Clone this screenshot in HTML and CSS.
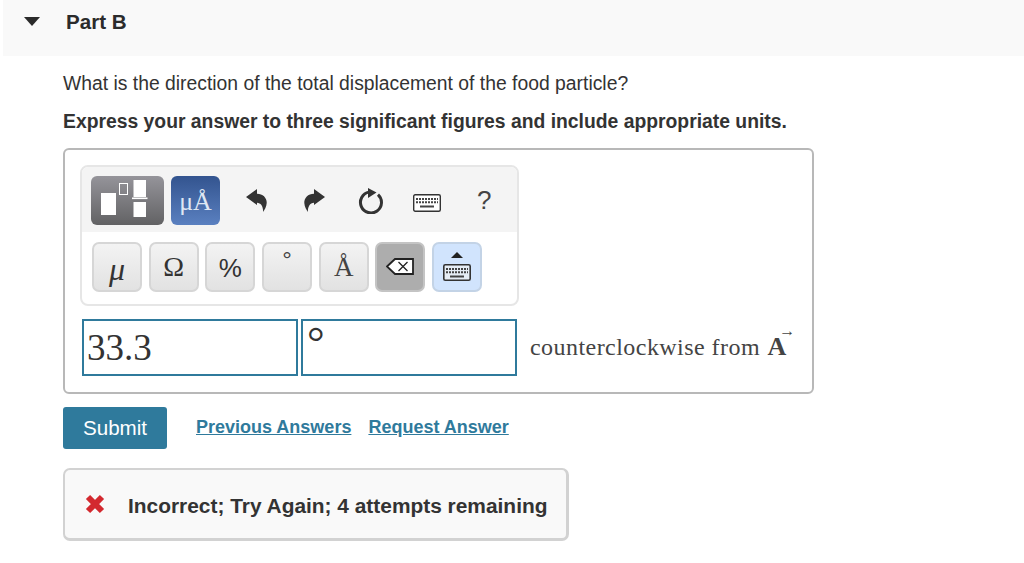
FILE: index.html
```html
<!doctype html>
<html lang="en">
  <head>
    <meta charset="UTF-8" />
    <title>Part B</title>
    <link rel="stylesheet" href="styles.css">
  </head>
  <body>
    <header class="part-header">
      <span class="caret"></span>
      <h2>Part B</h2>
    </header>

    <main class="part-body">
      <p class="question">What is the direction of the total displacement of the food particle?</p>
      <p class="instruction">Express your answer to three significant figures and include appropriate units.</p>

      <div class="answer-box">
        <div class="toolbar">
          <div class="toolbar-top">
            <button class="tool-main tool-templates" aria-label="Templates">
              <svg width="73" height="49" viewBox="0 0 73 49">
                <rect x="10" y="17" width="15" height="22" fill="#fff"/>
                <rect x="28.500" y="7.500" width="8" height="11" fill="none" stroke="#fff" stroke-width="1"/>
                <rect x="42.500" y="4" width="12.500" height="17" fill="#fff"/>
                <rect x="41" y="21.500" width="15.500" height="1.600" fill="#fff"/>
                <rect x="42.500" y="26" width="12.500" height="15" fill="#fff"/>
              </svg>
            </button>
            <button class="tool-main tool-units">μÅ</button>
            <div class="tool-icons">
              <svg class="tool-icon icon-undo" width="21" height="24" viewBox="0 0 21 24">
                <path d="M0 8 L11 0 V4.700 C17 4.700 21 9 20.700 14 C20.500 18 18.500 21 17 23 C17.500 18 15 13.700 11 13.700 V16 Z" fill="#333"/>
              </svg>
              <svg class="tool-icon icon-redo" width="21" height="24" viewBox="0 0 21 24">
                <path d="M21 8 L10 0 V4.700 C4 4.700 0 9 0.300 14 C0.500 18 2.500 21 4 23 C3.500 18 6 13.700 10 13.700 V16 Z" fill="#333"/>
              </svg>
              <svg class="tool-icon icon-reload" width="25" height="26" viewBox="0 0 25 26">
                <path d="M11 4.100 A10.500 10.500 0 1 0 20 6.600" fill="none" stroke="#333" stroke-width="3"/>
                <path d="M10 0 L18.500 4.500 L10 10 Z" fill="#333"/>
              </svg>
              <svg class="tool-icon icon-keyboard" width="28" height="18" viewBox="0 0 28 18">
                <rect x="0.700" y="0.700" width="26.600" height="16.600" rx="1.500" fill="#fff" stroke="#333" stroke-width="1.400"/>
                <path d="M3 5 H25 M3 8.200 H25" stroke="#444" stroke-width="2" stroke-dasharray="2 1"/>
                <path d="M7 12.500 H21" stroke="#444" stroke-width="2"/>
              </svg>
              <span class="tool-help">?</span>
            </div>
          </div>
          <div class="toolbar-keys">
            <button class="key key-mu">μ</button>
            <button class="key key-omega">Ω</button>
            <button class="key key-percent">%</button>
            <button class="key key-degree">°</button>
            <button class="key key-angstrom">Å</button>
            <button class="key key-delete" aria-label="Delete">
              <svg width="28" height="17" viewBox="0 0 28 17">
                <path d="M1 8.500 L9 1 H27 V16 H9 Z" fill="#fff" stroke="#222" stroke-width="1.800"/>
                <path d="M12.500 4 L21.500 13 M21.500 4 L12.500 13" stroke="#222" stroke-width="1.300"/>
              </svg>
            </button>
            <button class="key key-keyboard" aria-label="Toggle keyboard">
              <svg width="28" height="29" viewBox="0 0 28 29">
                <path d="M8 6 L14 0 L20 6 Z" fill="#222"/>
                <rect x="0.800" y="12.800" width="26.400" height="15.400" rx="1.500" fill="#e6edf5" stroke="#333" stroke-width="1.600"/>
                <path d="M3 17 H25 M3 20.200 H25" stroke="#444" stroke-width="2" stroke-dasharray="2 1"/>
                <path d="M7 24.500 H21" stroke="#444" stroke-width="2"/>
              </svg>
            </button>
          </div>
        </div>

        <div class="entry-row">
          <div class="entry entry-value">33.3</div>
          <div class="entry entry-unit">°</div>
          <div class="entry-label">counterclockwise from <span class="vector">A</span></div>
        </div>
      </div>

      <div class="actions">
        <button class="submit-btn">Submit</button>
        <a class="action-link" href="#">Previous Answers</a>
        <a class="action-link" href="#">Request Answer</a>
      </div>

      <div class="feedback">
        <svg width="20" height="20" viewBox="0 0 20 20">
          <path d="M3 3 L17 17 M17 3 L3 17" fill="none" stroke="#d3292f" stroke-width="6"/>
        </svg>
        <span class="feedback-text">Incorrect; Try Again; 4 attempts remaining</span>
      </div>
    </main>
  </body>
</html>
```

FILE: styles.css
```css
* {
  margin: 0;
  padding: 0;
  box-sizing: border-box;
}

body {
  font-family: 'Liberation Sans', Arial, sans-serif;
  color: #333;
  background: #fff;
  font-size: 19.330px;
}

button {
  font-family: inherit;
  border: none;
  cursor: pointer;
}

.part-header {
  display: flex;
  align-items: flex-start;
  height: 56px;
  margin-left: 3px;
  padding: 11px 0 0 21px;
  background: #f9f9f9;
}

.caret {
  width: 0;
  height: 0;
  margin-top: 6px;
  border-left: 8px solid transparent;
  border-right: 8px solid transparent;
  border-top: 9px solid #2b2b2b;
}

.part-header h2 {
  margin-left: 26px;
  font-size: 20.600px;
  line-height: 22px;
  font-weight: 700;
  color: #2b2b2b;
}

.part-body {
  padding: 17px 0 0 63px;
}

.question {
  line-height: 22px;
}

.instruction {
  margin-top: 16px;
  line-height: 22px;
  font-weight: 700;
}

.answer-box {
  width: 751px;
  height: 246px;
  margin-top: 15px;
  padding: 15px 0 0 15px;
  border: 2px solid #b8b8b8;
  border-radius: 6px;
}

.toolbar {
  width: 439px;
  height: 141px;
  border: 2px solid #e6e6e6;
  border-radius: 8px;
  overflow: hidden;
}

.toolbar-top {
  display: flex;
  align-items: center;
  height: 65px;
  padding: 2px 0 0 9px;
  background: #f4f4f4;
}

.tool-main {
  height: 49px;
  border-radius: 6px;
}

.tool-templates {
  width: 73px;
  padding: 0;
  background: linear-gradient(#95949a, #626264);
}

.tool-templates svg {
  display: block;
}

.tool-units {
  width: 49px;
  margin-left: 7px;
  padding-top: 3px;
  background: linear-gradient(#33548f, #5a80c0);
  color: #dfe7f3;
  font-family: 'Liberation Serif', serif;
  font-size: 26px;
}

.tool-icons {
  display: flex;
  align-items: center;
  flex: 1;
}

.tool-icon {
  flex: none;
}

.icon-undo {
  margin-left: 26px;
}

.icon-redo {
  margin-left: 37px;
}

.icon-reload {
  margin-left: 33px;
}

.icon-keyboard {
  margin-left: 30px;
  margin-top: 5px;
}

.tool-help {
  margin-left: 36px;
  font-size: 26px;
  color: #444;
}

.toolbar-keys {
  display: flex;
  gap: 6.670px;
  padding: 9.500px 0 0 10px;
}

.key {
  display: flex;
  align-items: center;
  justify-content: center;
  flex: none;
  width: 50px;
  height: 50px;
  padding: 0;
  border: 2px solid #d6d6d6;
  border-radius: 7px;
  background: linear-gradient(#f3f3f3, #e2e2e2);
  color: #333;
}

.key-mu {
  padding-top: 5px;
  font-family: 'Liberation Serif', serif;
  font-style: italic;
  font-size: 32px;
}

.key-omega {
  font-family: 'Liberation Serif', serif;
  font-size: 28px;
}

.key-percent {
  padding-top: 3px;
  font-size: 26px;
}

.key-degree {
  align-items: flex-start;
  padding-top: 2px;
  font-size: 24px;
  color: #444;
}

.key-angstrom {
  padding-top: 1px;
  font-family: 'Liberation Serif', serif;
  font-size: 27px;
  color: #444;
}

.key-delete {
  background: #adadad;
  border-color: #c4c4c4;
}

.key-keyboard {
  background: #d1e4fd;
  border-color: #c3d3e6;
}

.entry-row {
  display: flex;
  margin-top: 13px;
  margin-left: 2px;
}

.entry {
  width: 216px;
  height: 57px;
  border: 2px solid #2f7a9c;
}

.entry-value {
  padding-left: 3px;
  font-family: 'Liberation Serif', serif;
  font-size: 37px;
  line-height: 53px;
}

.entry-unit {
  margin-left: 3px;
  padding-left: 4px;
  font-family: 'Liberation Serif', serif;
  font-size: 44px;
  line-height: 44px;
}

.entry-label {
  margin-left: 13px;
  margin-top: 13px;
  font-family: 'Liberation Serif', serif;
  font-size: 24px;
  letter-spacing: 0.450px;
  white-space: nowrap;
  color: #444;
}

.vector {
  position: relative;
  margin-left: 1px;
  font-size: 26px;
  font-weight: 700;
}

.vector::after {
  content: '→';
  position: absolute;
  top: -10px;
  right: -9px;
  font-size: 16px;
  font-weight: 400;
}

.actions {
  display: flex;
  align-items: center;
  margin-top: 13px;
}

.submit-btn {
  width: 104px;
  height: 42px;
  background: #2f7a9c;
  color: #fff;
  font-size: 20.600px;
  border-radius: 3px;
}

.action-link {
  margin-left: 17px;
  margin-top: -1px;
  color: #2f7a9c;
  font-size: 18px;
  font-weight: 700;
}

.submit-btn + .action-link {
  margin-left: 29px;
}

.feedback {
  display: flex;
  align-items: center;
  gap: 23px;
  width: 506px;
  height: 73px;
  margin-top: 19px;
  padding-left: 20px;
  background: #f9f9f9;
  border: 2px solid #d2d2d2;
  border-bottom-width: 3px;
  border-right-width: 3px;
  border-radius: 7px;
  font-size: 20.900px;
  font-weight: 700;
}

.feedback-text {
  margin-top: 3px;
}
```
